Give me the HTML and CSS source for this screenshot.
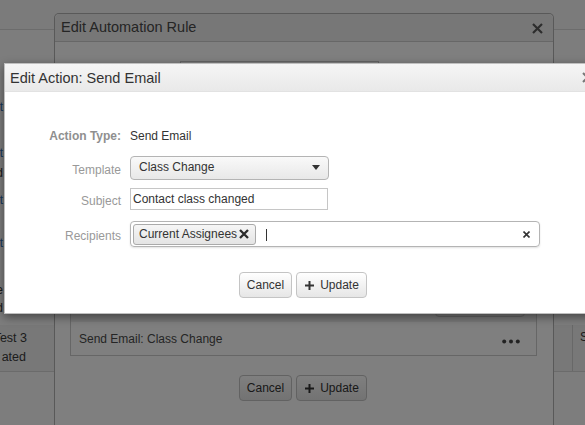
FILE: index.html
```html
<!DOCTYPE html>
<html>
<head>
<meta charset="utf-8">
<title>Edit Action: Send Email</title>
<link rel="stylesheet" href="styles.css">
</head>
<body>
<div class="page">
  <header class="topbar"></header>
  <div class="page-main">
    <ul class="side-links">
      <li class="lk">Edit</li>
      <li class="lk">Edit</li>
      <li class="tx">Rd</li>
      <li class="lk">Edit</li>
      <li class="lk">Edit</li>
      <li class="tx">Re</li>
      <li class="tx">Ad</li>
    </ul>
    <div class="tbl-row">
      <div class="cell-name"><span class="nm1">Test 3</span><span class="nm2">ated</span></div>
      <div class="cell-mid"></div>
      <div class="cell-status">Send</div>
    </div>
  </div>
</div>

<div class="rule-modal">
  <div class="rule-head">
    <span class="rule-title">Edit Automation Rule</span>
    <svg class="rule-x" width="11" height="11" viewBox="0 0 11 11"><path d="M1 1l9 9M10 1l-9 9" stroke="#5a5a5a" stroke-width="2.2" fill="none"/></svg>
  </div>
  <div class="rule-body">
    <div class="rule-field"></div>
    <div class="actions-panel">
      <div class="panel-head"><button class="btn btn-add" type="button">Add Action</button></div>
      <div class="panel-row">
        <span>Send Email: Class Change</span>
        <svg class="dots" width="18" height="5" viewBox="0 0 18 5"><circle cx="2.2" cy="2.5" r="2" fill="#444"/><circle cx="9" cy="2.5" r="2" fill="#444"/><circle cx="15.8" cy="2.5" r="2" fill="#444"/></svg>
      </div>
    </div>
    <div class="footer footer-rule">
      <button class="btn btn-cancel" type="button">Cancel</button>
      <button class="btn btn-update" type="button"><svg width="9" height="9" viewBox="0 0 9 9"><path d="M4.5 0v9M0 4.5h9" stroke="#333" stroke-width="2" fill="none"/></svg><span>Update</span></button>
    </div>
  </div>
</div>

<div class="backdrop"></div>

<div class="action-modal">
  <div class="action-head">
    <span class="action-title">Edit Action: Send Email</span>
    <svg class="action-x" width="11" height="11" viewBox="0 0 11 11"><path d="M1 1l9 9M10 1l-9 9" stroke="#777" stroke-width="2" fill="none"/></svg>
  </div>
  <div class="action-body">
    <div class="frow frow-type">
      <div class="flabel flabel-strong">Action Type:</div>
      <div class="fvalue">Send Email</div>
    </div>
    <div class="frow frow-template">
      <div class="flabel">Template</div>
      <div class="select">
        <span>Class Change</span>
        <svg width="8" height="5" viewBox="0 0 8 5"><path d="M0 0h8L4 5z" fill="#333"/></svg>
      </div>
    </div>
    <div class="frow frow-subject">
      <div class="flabel">Subject</div>
      <div class="textbox">Contact class changed</div>
    </div>
    <div class="frow frow-recip">
      <div class="flabel">Recipients</div>
      <div class="tagbox">
        <span class="tag">Current Assignees<svg width="10" height="10" viewBox="0 0 10 10"><path d="M1 1l8 8M9 1l-8 8" stroke="#2b2b2b" stroke-width="2.3" fill="none"/></svg></span>
        <span class="caret"></span>
        <svg class="clear-x" width="7" height="7" viewBox="0 0 7 7"><path d="M0.5 0.5l6 6M6.5 0.5l-6 6" stroke="#333" stroke-width="1.6" fill="none"/></svg>
      </div>
    </div>
    <div class="footer footer-action">
      <button class="btn btn-cancel" type="button">Cancel</button>
      <button class="btn btn-update" type="button"><svg width="9" height="9" viewBox="0 0 9 9"><path d="M4.5 0v9M0 4.5h9" stroke="#333" stroke-width="2" fill="none"/></svg><span>Update</span></button>
    </div>
  </div>
</div>
</body>
</html>
```

FILE: styles.css
```css
* { box-sizing: border-box; }
html, body { margin: 0; padding: 0; }
body {
  width: 585px;
  height: 425px;
  overflow: hidden;
  position: relative;
  font-family: "Liberation Sans", Arial, sans-serif;
  font-size: 12px;
  color: #333;
  background: #fff;
}

/* ---------- background page ---------- */
.page { height: 425px; background: #fafafa; }
.topbar { height: 30px; border-bottom: 1px solid #d8d8d8; background: #f6f6f6; }
.side-links {
  list-style: none;
  margin: 0;
  padding: 0;
  width: 3px;
  display: flex;
  flex-direction: column;
  align-items: flex-end;
}
.side-links li { height: 16px; line-height: 16px; white-space: nowrap; font-size: 12px; }
.side-links .lk { color: #2a6fb5; }
.side-links .tx { color: #333; }
.side-links li:nth-child(1) { margin-top: 69px; }
.side-links li:nth-child(2) { margin-top: 30px; }
.side-links li:nth-child(3) { margin-top: 4px; }
.side-links li:nth-child(4) { margin-top: 11px; }
.side-links li:nth-child(5) { margin-top: 27px; }
.side-links li:nth-child(6) { margin-top: 31px; }
.side-links li:nth-child(7) { margin-top: 2px; }

.tbl-row {
  margin-top: 9px;
  height: 47px;
  display: flex;
  background: #f1f1f1;
  border-bottom: 1px solid #d6d6d6;
}
.cell-name {
  width: 27px;
  flex: none;
  display: flex;
  flex-direction: column;
  align-items: flex-end;
  padding-top: 4px;
  line-height: 19px;
  white-space: nowrap;
  color: #3a3a3a;
  font-size: 12.5px;
}
.nm2 { margin-right: 1px; }
.cell-mid { width: 545px; flex: none; }
.cell-status {
  flex: 1;
  border-left: 1px solid #d0d0d0;
  padding: 5px 0 0 7px;
  white-space: nowrap;
  overflow: hidden;
  color: #3a3a3a;
}

/* ---------- first modal (behind) ---------- */
.rule-modal {
  position: absolute;
  left: 54px;
  top: 13px;
  width: 500px;
  height: 430px;
  background: #fff;
  border: 1px solid rgba(0, 0, 0, 0.3);
  border-radius: 5px 5px 0 0;
}
.rule-head {
  height: 28px;
  border-bottom: 1px solid #cfcfcf;
  background: #efefef;
  border-radius: 5px 5px 0 0;
  display: flex;
  align-items: center;
  justify-content: space-between;
  padding: 0 10px 2px 6px;
}
.rule-title { font-size: 14.5px; color: #4a4a4a; }
.rule-x { margin-top: 3px; }
.rule-body { padding-top: 19px; }
.rule-field {
  margin-left: 125px;
  width: 199px;
  height: 28px;
  border: 1px solid #c8c8c8;
}
.actions-panel {
  margin: 201px 16px 0 15px;
  border: 1px solid #cdcdcd;
  border-top: none;
}
.panel-head {
  height: 32px;
  background: #eeeeee;
  display: flex;
  justify-content: flex-end;
  align-items: flex-end;
  padding: 0 11px 5px 0;
}
.btn-add { width: 90px; height: 24px; }
.panel-row {
  height: 33px;
  display: flex;
  align-items: center;
  justify-content: space-between;
  padding: 0 16px 0 8px;
  color: #4a4a4a;
}
.dots { margin-top: 5px; }

/* ---------- buttons ---------- */
.footer { display: flex; justify-content: center; gap: 4px; }
.footer-rule { margin-top: 19px; padding-right: 2px; }
.btn {
  font-family: "Liberation Sans", Arial, sans-serif;
  font-size: 12px;
  color: #333;
  height: 26px;
  border: 1px solid #c4c4c4;
  border-radius: 4px;
  background: linear-gradient(#ffffff, #e6e6e6);
  padding: 0;
  display: inline-flex;
  align-items: center;
  justify-content: center;
  margin: 0;
}
.btn-cancel { width: 53px; }
.btn-update { width: 71px; gap: 6px; padding: 0 8px 0 9px; }
.btn-update svg { flex: none; }

.backdrop {
  position: absolute;
  inset: 0;
  background: rgba(0, 0, 0, 0.5);
}

/* ---------- second modal (front) ---------- */
.action-modal {
  position: absolute;
  left: 4px;
  top: 63px;
  width: 600px;
  background: #fff;
  border: 1px solid rgba(0, 0, 0, 0.25);
  box-shadow: 0 3px 9px rgba(0, 0, 0, 0.45);
}
.action-head {
  height: 28px;
  background: linear-gradient(#f5f5f5, #e9e9e9);
  border-bottom: 1px solid #e2e2e2;
  display: flex;
  align-items: center;
  justify-content: space-between;
  padding: 0 10px 0 5px;
}
.action-title { font-size: 14.5px; color: #333; }
.action-body { padding: 36px 0 15px 0; }

.frow { display: flex; align-items: center; gap: 9px; }
.flabel {
  width: 116px;
  flex: none;
  text-align: right;
  color: #999;
  line-height: 16px;
  padding-top: 3px;
}
.flabel-strong { font-weight: bold; color: #8f8f8f; padding-top: 0; }
.frow-type { height: 16px; }
.fvalue { line-height: 16px; color: #333; }
.frow-template { margin-top: 12px; }
.frow-subject { margin-top: 8px; }
.frow-recip { margin-top: 11px; }
.footer-action { margin-top: 25px; padding-right: 2px; }

.select {
  width: 199px;
  height: 24px;
  border: 1px solid #b4b4b4;
  border-radius: 4px;
  background: linear-gradient(#f9f9f9, #e8e8e8);
  display: flex;
  align-items: center;
  justify-content: space-between;
  padding: 0 8px 2px 8px;
  color: #333;
}

.textbox {
  width: 198px;
  height: 22px;
  border: 1px solid #c6c6c6;
  display: flex;
  align-items: center;
  padding: 0 2px;
  color: #333;
}

.tagbox {
  width: 410px;
  height: 26px;
  border: 1px solid #b4b4b4;
  border-radius: 4px;
  box-shadow: 0 1px 2px rgba(0, 0, 0, 0.12);
  display: flex;
  align-items: center;
  padding: 0 9px 0 2px;
}
.tag {
  height: 21px;
  display: inline-flex;
  align-items: center;
  gap: 2px;
  padding: 0 6px 0 5px;
  border: 1px solid #aaaaaa;
  border-radius: 3px;
  background: linear-gradient(#f6f6f6, #e4e4e4);
  color: #333;
  white-space: nowrap;
}
.tag svg { margin-top: 0; }
.caret {
  width: 1px;
  height: 12px;
  background: #333;
  margin-left: 10px;
  margin-top: 1px;
}
.clear-x { margin-left: auto; }
```
